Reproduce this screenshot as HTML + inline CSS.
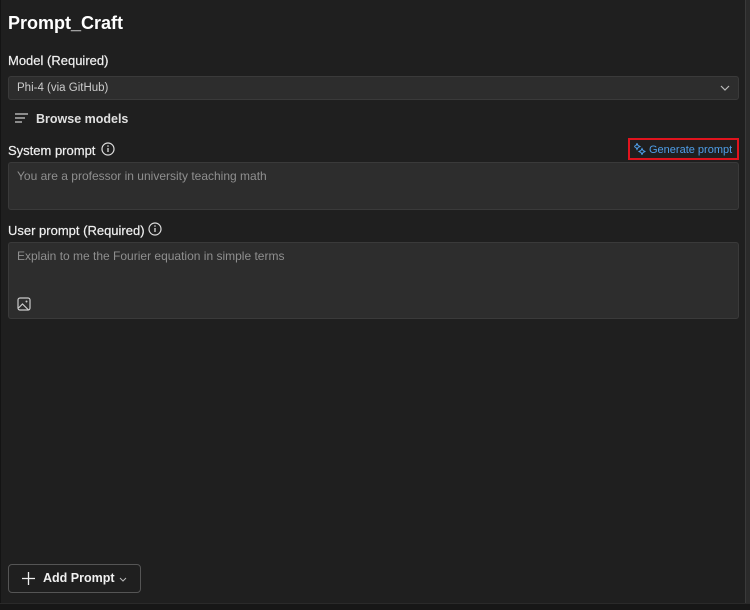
<!DOCTYPE html>
<html><head><meta charset="utf-8"><style>
*{box-sizing:border-box;margin:0;padding:0}
body{width:750px;height:610px;background:#1f1f1f;font-family:"Liberation Sans",sans-serif;position:relative;overflow:hidden;color:#fff}
.edge{position:absolute;left:0;top:0;width:1px;height:610px;background:#141414}
.redge{position:absolute;left:745px;top:0;width:5px;height:610px;background:#2b2b2b;border-left:1px solid #3a3a3a}
.bot{position:absolute;left:0;top:603px;width:750px;height:7px;background:#171717;border-top:1px solid #2a2a2a}
.abs{position:absolute}
h1{position:absolute;left:8px;top:13px;font-size:18px;font-weight:bold;color:#fff}
.lbl{position:absolute;left:8px;font-size:13px;color:#f0f0f0;-webkit-text-stroke:0.2px #f0f0f0}
.box{position:absolute;left:8px;width:731px;background:#2d2d2d;border:1px solid #3a3a3a;border-radius:3px;font-size:12px;color:#8f8f8f;padding:6px 8px}
</style></head><body>
<div class="edge"></div><div class="redge"></div><div class="bot"></div>
<h1>Prompt_Craft</h1>
<div class="lbl" style="top:53px">Model (Required)</div>
<div class="box" style="top:76px;height:24px;padding:5px 8px;color:#ccc;font-size:11.5px">Phi-4 (via GitHub)
<svg class="abs" style="right:8px;top:8px" width="10" height="6" viewBox="0 0 10 6"><path d="M1 1l4 4 4-4" stroke="#bbb" fill="none" stroke-width="1.2"/></svg></div>
<svg class="abs" style="left:15px;top:113px" width="14" height="11" viewBox="0 0 14 11"><path d="M0 1h13M0 5h10M0 9h7" stroke="#ccc" stroke-width="1.2"/></svg>
<div class="abs" style="left:36px;top:112px;font-size:12.5px;font-weight:bold;color:#e0e0e0">Browse models</div>
<div class="lbl" style="top:143px">System prompt</div>
<svg class="abs" style="left:101px;top:142px" width="14" height="14" viewBox="0 0 14 14"><circle cx="7" cy="7" r="6" fill="none" stroke="#ddd" stroke-width="1.2"/><path d="M7 6v4" stroke="#ddd" stroke-width="1.3"/><circle cx="7" cy="4" r="0.8" fill="#ddd"/></svg>
<div class="abs" style="left:628px;top:138px;width:111px;height:22px;border:2px solid #e0141e"></div>
<svg class="abs" style="left:634px;top:143px" width="12" height="12" viewBox="0 0 12 12"><path d="M3 0.5l1 2 2 1-2 1-1 2-1-2-2-1 2-1z M8 5.5l1 2 2 1-2 1-1 2-1-2-2-1 2-1z" fill="none" stroke="#4f9ee8" stroke-width="1"/></svg>
<div class="abs" style="left:649px;top:144px;font-size:11px;color:#4f9ee8">Generate prompt</div>
<div class="box" style="top:162px;height:48px">You are a professor in university teaching math</div>
<div class="lbl" style="top:223px">User prompt (Required)</div>
<svg class="abs" style="left:148px;top:222px" width="14" height="14" viewBox="0 0 14 14"><circle cx="7" cy="7" r="6" fill="none" stroke="#ddd" stroke-width="1.2"/><path d="M7 6v4" stroke="#ddd" stroke-width="1.3"/><circle cx="7" cy="4" r="0.8" fill="#ddd"/></svg>
<div class="box" style="top:242px;height:77px">Explain to me the Fourier equation in simple terms
<svg class="abs" style="left:8px;top:54px" width="14" height="14" viewBox="0 0 14 14"><rect x="1" y="1" width="12" height="12" rx="2" fill="none" stroke="#ccc" stroke-width="1.2"/><path d="M1.5 11l4-4 6 6" fill="none" stroke="#ccc" stroke-width="1.2"/><circle cx="9.5" cy="4.5" r="1" fill="#ccc"/></svg></div>
<div class="abs" style="left:8px;top:564px;width:133px;height:29px;border:1px solid #555;border-radius:4px;background:#1f1f1f"></div>
<svg class="abs" style="left:22px;top:572px" width="13" height="13" viewBox="0 0 13 13"><path d="M6.5 0v13M0 6.5h13" stroke="#eee" stroke-width="1.3"/></svg>
<div class="abs" style="left:43px;top:571px;font-size:12.5px;font-weight:bold;color:#f0f0f0">Add Prompt</div>
<svg class="abs" style="left:119px;top:577px" width="8" height="5" viewBox="0 0 8 5"><path d="M1 1l3 3 3-3" stroke="#bbb" fill="none"/></svg>
</body></html>
